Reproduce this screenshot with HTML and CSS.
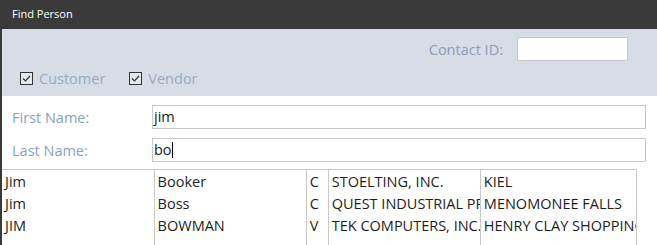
FILE: index.html
```html
<!DOCTYPE html>
<html lang="en">
<head>
    <meta charset="UTF-8">
    <title>Find Person</title>
    <link rel="stylesheet" href="styles.css">
</head>
<body>
    <!-- Window title -->
    <div class="titlebar">Find Person</div>

    <div class="window">
        <!-- Filter area -->
        <div class="filters">
            <div class="contact-row">
                <span class="label">Contact ID:</span>
                <div class="field contact-field"></div>
            </div>
            <div class="check-row">
                <label class="check"><span class="box"><svg viewBox="0 0 11 11" width="11" height="11"><path d="M2 5.5 L4.5 8 L9 3" fill="none" stroke="#333" stroke-width="1.2"/></svg></span>Customer</label>
                <label class="check"><span class="box"><svg viewBox="0 0 11 11" width="11" height="11"><path d="M2 5.5 L4.5 8 L9 3" fill="none" stroke="#333" stroke-width="1.2"/></svg></span>Vendor</label>
            </div>
        </div>

        <!-- Name search -->
        <div class="names">
            <div class="name-row">
                <span class="label">First Name:</span>
                <div class="field">jim</div>
            </div>
            <div class="name-row">
                <span class="label">Last Name:</span>
                <div class="field">bo<span class="caret"></span></div>
            </div>
        </div>

        <!-- Results -->
        <table class="results">
            <colgroup>
                <col class="c-first">
                <col class="c-last">
                <col class="c-type">
                <col class="c-company">
                <col class="c-city">
            </colgroup>
            <tr><td>Jim</td><td>Booker</td><td>C</td><td>STOELTING, INC.</td><td>KIEL</td></tr>
            <tr><td>Jim</td><td>Boss</td><td>C</td><td>QUEST INDUSTRIAL PRODUCTS</td><td>MENOMONEE FALLS</td></tr>
            <tr><td>JIM</td><td>BOWMAN</td><td>V</td><td>TEK COMPUTERS, INC.</td><td>HENRY CLAY SHOPPING CENTER</td></tr>
            <tr class="filler"><td></td><td></td><td></td><td></td><td></td></tr>
        </table>
    </div>
</body>
</html>
```

FILE: styles.css
```css
/* General styles */
body {
    margin: 0;
    width: 657px;
    height: 245px;
    overflow: hidden;
    background-color: #fff;
    font-family: "Open Sans", "Noto Sans", sans-serif;
    font-size: 14.5px;
}

/* Dark title bar */
.titlebar {
    height: 29px;
    line-height: 28px;
    padding-left: 12px;
    background-color: #3a3a3a;
    color: #fff;
    font-size: 11px;
}

.window {
    border-left: 2px solid #3a3a3a;
    height: 216px;
    overflow: hidden;
}

/* Filter area */
.filters {
    height: 67px;
    background-color: #d6dde6;
}

.contact-row {
    display: flex;
    justify-content: flex-end;
    align-items: center;
    gap: 14px;
    padding: 8px 29px 0 0;
}

.label {
    color: #8a9fbc;
}

.field {
    box-sizing: border-box;
    height: 24px;
    border: 1px solid #c8c8c8;
    background-color: #fff;
    padding-left: 1px;
    line-height: 21px;
    font-size: 14.5px;
    color: #1a1a1a;
}

.contact-field {
    width: 111px;
}

.check-row {
    display: flex;
    gap: 24px;
    padding: 8px 0 0 18px;
}

.check {
    display: flex;
    align-items: center;
    gap: 6px;
    color: #97aac4;
}

.box {
    box-sizing: border-box;
    width: 13px;
    height: 13px;
    border: 1px solid #333;
    background-color: #e4e9ef;
    display: flex;
}

/* Name search */
.names {
    padding: 9px 11px 7px 10px;
    display: flex;
    flex-direction: column;
    gap: 9px;
}

.name-row {
    display: flex;
    align-items: center;
}

.name-row .label {
    width: 140px;
    flex-shrink: 0;
}

.name-row .field {
    flex: 1;
}

.caret {
    display: inline-block;
    width: 1px;
    height: 16px;
    background-color: #000;
    vertical-align: -3px;
}

/* Results grid */
.results {
    width: 635px;
    table-layout: fixed;
    border-collapse: collapse;
    border-top: 1px solid #c8c8c8;
}

.c-first { width: 152px; }
.c-last { width: 152px; }
.c-type { width: 22px; }
.c-company { width: 152px; }
.c-city { width: 156px; }

.results td {
    height: 22px;
    padding: 0 0 0 3px;
    white-space: nowrap;
    overflow: hidden;
    text-overflow: clip;
    color: #1e1e1e;
    border-left: 1px solid #c8c8c8;
    border-right: 1px solid #c8c8c8;
}

.results td:first-child {
    border-left: none;
}

.results .filler td {
    height: 40px;
}
```
